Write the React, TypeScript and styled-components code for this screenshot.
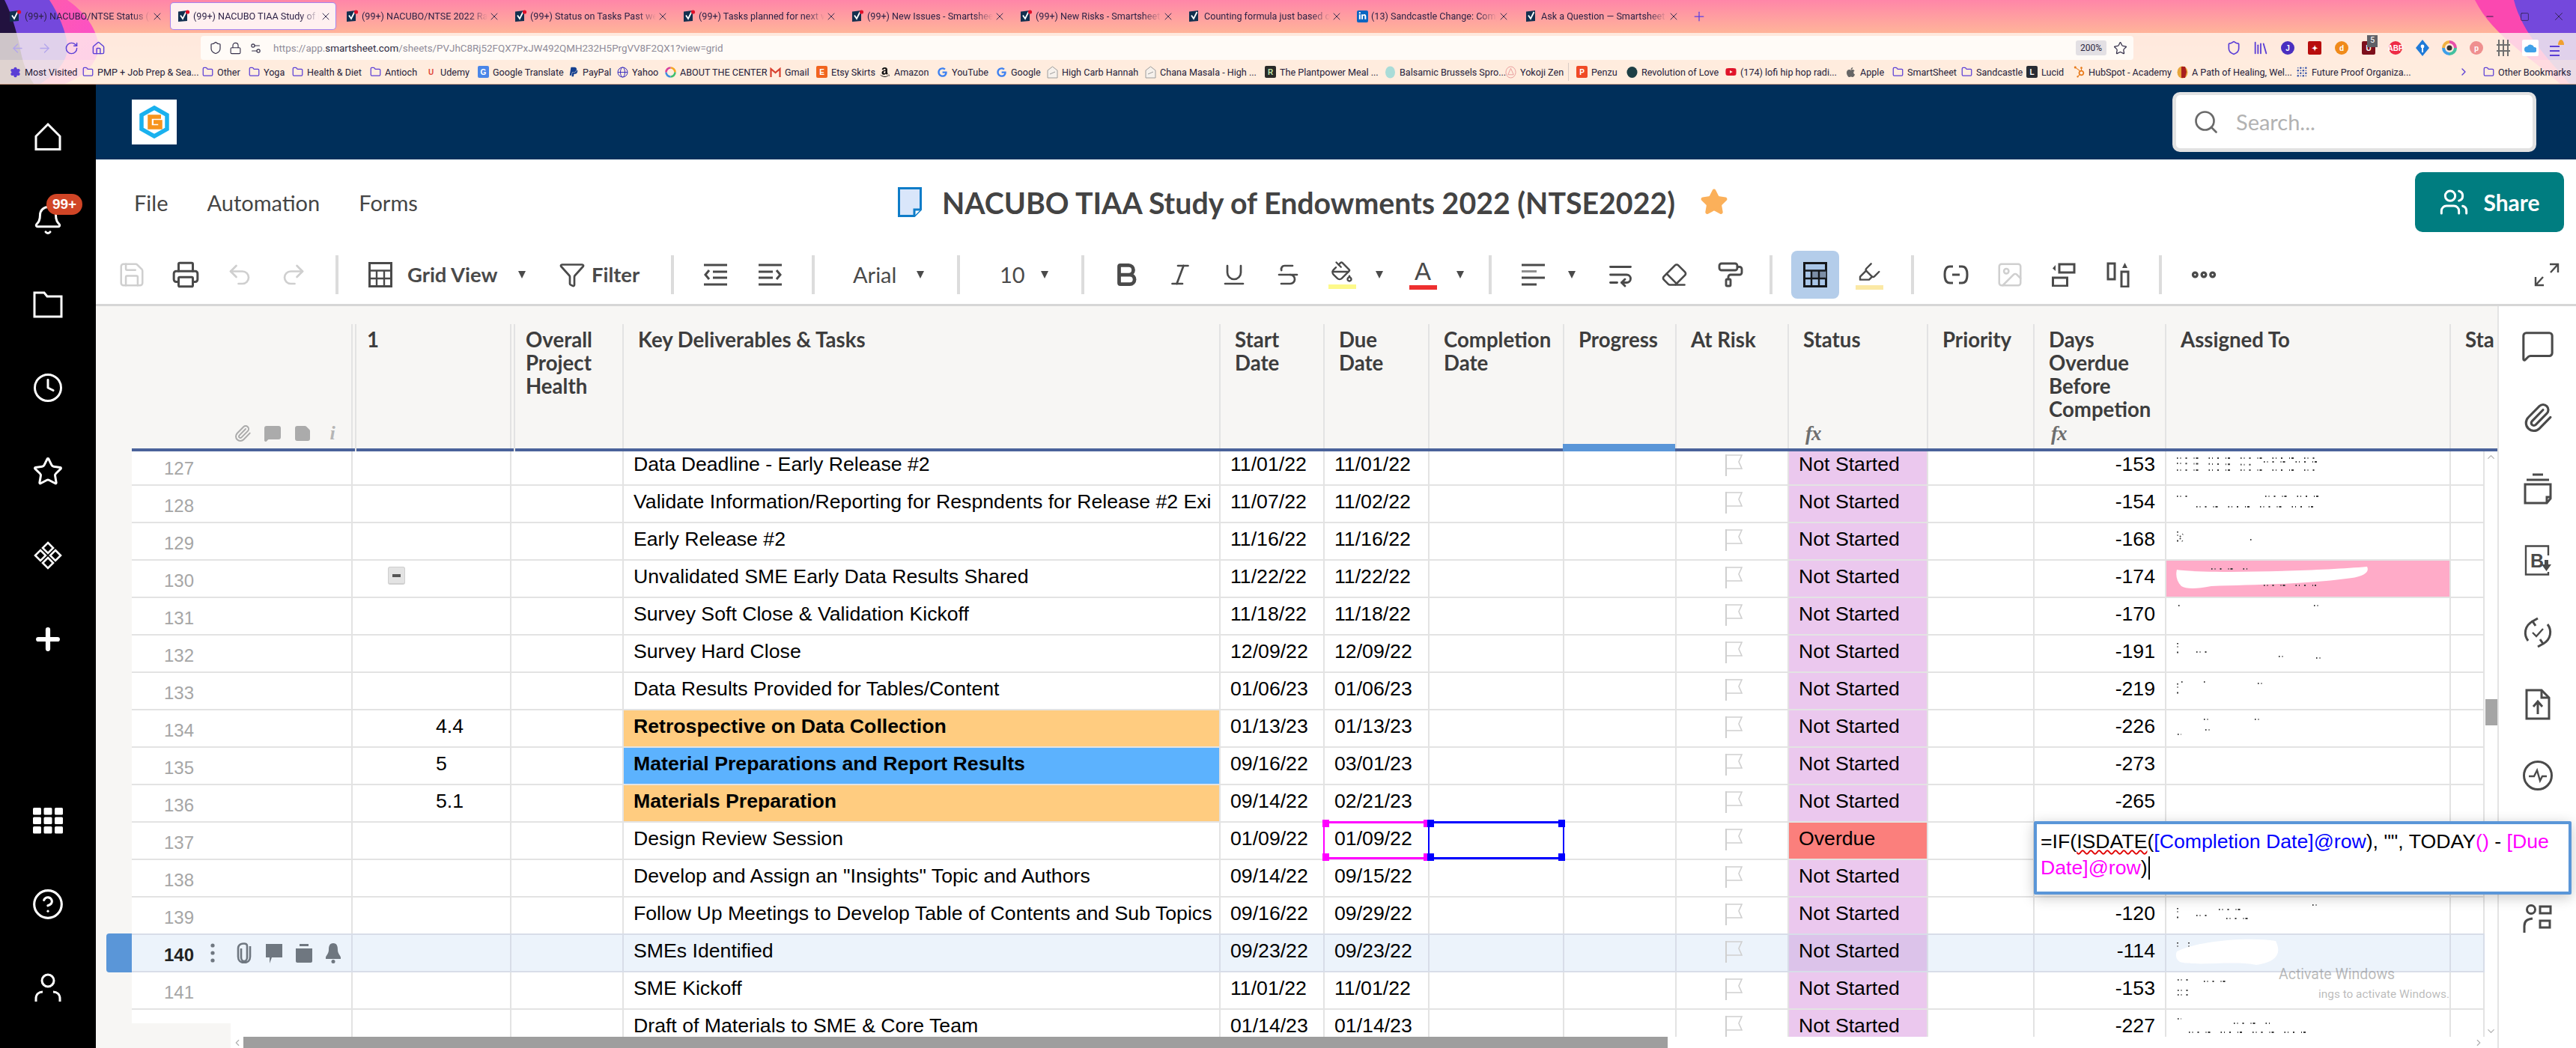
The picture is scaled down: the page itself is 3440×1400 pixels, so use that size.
import React from "react";
import styled, { createGlobalStyle, css } from "styled-components";
import {
  ArrowLeft,
  ArrowRight,
  Bold,
  Bell,
  ChevronLeft,
  ChevronRight,
  ChevronUp,
  ChevronDown,
  CircleHelp,
  Clock,
  Eraser,
  Filter,
  Highlighter,
  Home,
  Image,
  Italic,
  Library,
  Lock,
  Minus,
  MoreHorizontal,
  PaintBucket,
  PaintRoller,
  Paperclip,
  Plus,
  Printer,
  Redo2,
  RotateCw,
  Save,
  Search,
  Settings2,
  Shield,
  Star,
  Strikethrough,
  Underline,
  Undo2,
  Users,
  WrapText,
  X,
  Folder,
  Settings,
  MessageSquare,
  Square,
} from "lucide-react";
import { FaAmazon, FaApple, FaGoogle, FaHubspot, FaPaypal, FaYoutube, FaLinkedinIn } from "react-icons/fa";

const GlobalStyle = createGlobalStyle`
  * {
    box-sizing: border-box;
  }

  html, body {
    margin: 0;
    padding: 0;
    background: #fff;
  }

  body {
    font-family: "Liberation Sans", Arial, sans-serif;
  }
`;

const COLUMN_WIDTHS = "295px 212px 150px 797px 139px 140px 180px 150px 150px 186px 142px 176px 380px";
const COLUMNS = `${COLUMN_WIDTHS} 45px`;
// the header runs on above the vertical scrollbar
const HEADER_COLUMNS = `${COLUMN_WIDTHS} 62px`;

type RowData = {
  n: number;
  one?: string;
  name: string;
  fill?: "orange" | "blue";
  start: string;
  due: string;
  status: string;
  days?: string;
  ink?: string;
  blob?: string;
  toggle?: boolean;
  pink?: boolean;
  current?: boolean;
  selected?: boolean;
};

const ROWS: RowData[] = [
  { n: 127, name: "Data Deadline - Early Release #2", start: "11/01/22", due: "11/01/22", status: "Not Started", days: "-153", ink: "M14 13H206M14 20L120 22M130 18H206M14 29H206" },
  { n: 128, name: "Validate Information/Reporting for Respndents for Release #2 Exi", start: "11/07/22", due: "11/02/22", status: "Not Started", days: "-154", ink: "M14 14H30M132 14H205M40 28H205" },
  { n: 129, name: "Early Release #2", start: "11/16/22", due: "11/16/22", status: "Not Started", days: "-168", ink: "M15 11V28M18 18L25 12M18 20L25 28M112 22H116" },
  { n: 130, name: "Unvalidated SME Early Data Results Shared", start: "11/22/22", due: "11/22/22", status: "Not Started", days: "-174", toggle: true, pink: true, ink: "M60 11H110M130 33H200", blob: "M14 12C50 18 200 14 268 8C272 16 262 22 240 24C180 32 110 32 60 34C40 38 26 38 20 34C14 28 12 20 14 12Z" },
  { n: 131, name: "Survey Soft Close & Validation Kickoff", start: "11/18/22", due: "11/18/22", status: "Not Started", days: "-170", ink: "M16 10H18M197 10H206" },
  { n: 132, name: "Survey Hard Close", start: "12/09/22", due: "12/09/22", status: "Not Started", days: "-191", ink: "M15 10V30M40 22H58M150 28H156M200 30H206" },
  { n: 133, name: "Data Results Provided for Tables/Content", start: "01/06/23", due: "01/06/23", status: "Not Started", days: "-219", ink: "M15 14V32M20 12H22M50 12H54M122 14H130" },
  { n: 134, name: "Retrospective on Data Collection", one: "4.4", fill: "orange", start: "01/13/23", due: "01/13/23", status: "Not Started", days: "-226", ink: "M15 32H20M50 12H60M52 26H58M118 12H128" },
  { n: 135, name: "Material Preparations and Report Results", one: "5", fill: "blue", start: "09/16/22", due: "03/01/23", status: "Not Started", days: "-273" },
  { n: 136, name: "Materials Preparation", one: "5.1", fill: "orange", start: "09/14/22", due: "02/21/23", status: "Not Started", days: "-265" },
  { n: 137, name: "Design Review Session", start: "01/09/22", due: "01/09/22", status: "Overdue", selected: true },
  { n: 138, name: "Develop and Assign an \"Insights\" Topic and Authors", start: "09/14/22", due: "09/15/22", status: "Not Started" },
  { n: 139, name: "Follow Up Meetings to Develop Table of Contents and Sub Topics", start: "09/16/22", due: "09/29/22", status: "Not Started", days: "-120", ink: "M15 14V28M40 24H60M70 16H100M80 28H120M195 10H205" },
  { n: 140, name: "SMEs Identified", start: "09/23/22", due: "09/23/22", status: "Not Started", days: "-114", current: true, ink: "M15 10V16M30 10V16M60 24H90M100 20H120", blob: "M14 22C40 8 110 2 146 8C154 24 148 36 120 40C90 34 40 42 18 36C12 32 12 26 14 22Z" },
  { n: 141, name: "SME Kickoff", start: "11/01/22", due: "11/01/22", status: "Not Started", days: "-153", ink: "M15 10H30M50 12H90M15 24H30M15 30H35" },
  { n: 142, name: "Draft of Materials to SME & Core Team", start: "01/14/23", due: "01/14/23", status: "Not Started", days: "-227", ink: "M15 12H20M90 18H140M30 30H190" },
];

const TABS = [
  "(99+) NACUBO/NTSE Status (2022) Report",
  "(99+) NACUBO TIAA Study of Endowments",
  "(99+) NACUBO/NTSE 2022 Raid Log",
  "(99+) Status on Tasks Past week",
  "(99+) Tasks planned for next week",
  "(99+) New Issues - Smartsheet.com",
  "(99+) New Risks - Smartsheet.com",
  "Counting formula just based on",
  "(13) Sandcastle Change: Company",
  "Ask a Question — Smartsheet Community",
];

const BOOKMARKS: { x: number; kind: string; label?: string }[] = [
  { x: 13, kind: "gear", label: "Most Visited" },
  { x: 110, kind: "folder", label: "PMP + Job Prep & Sea..." },
  { x: 270, kind: "folder", label: "Other" },
  { x: 332, kind: "folder", label: "Yoga" },
  { x: 390, kind: "folder", label: "Health & Diet" },
  { x: 494, kind: "folder", label: "Antioch" },
  { x: 568, kind: "udemy", label: "Udemy" },
  { x: 638, kind: "translate", label: "Google Translate" },
  { x: 758, kind: "paypal", label: "PayPal" },
  { x: 824, kind: "globe", label: "Yahoo" },
  { x: 888, kind: "ring", label: "ABOUT THE CENTER" },
  { x: 1028, kind: "gmail", label: "Gmail" },
  { x: 1090, kind: "etsy", label: "Etsy Skirts" },
  { x: 1174, kind: "amazon", label: "Amazon" },
  { x: 1251, kind: "google", label: "YouTube" },
  { x: 1330, kind: "google", label: "Google" },
  { x: 1398, kind: "page", label: "High Carb Hannah" },
  { x: 1529, kind: "page", label: "Chana Masala - High ..." },
  { x: 1689, kind: "rr", label: "The Plantpower Meal ..." },
  { x: 1849, kind: "sprout", label: "Balsamic Brussels Spro..." },
  { x: 2010, kind: "yokoji", label: "Yokoji Zen" },
  { x: 2094, kind: "sep" },
  { x: 2105, kind: "penzu", label: "Penzu" },
  { x: 2172, kind: "tree", label: "Revolution of Love" },
  { x: 2304, kind: "youtube", label: "(174) lofi hip hop radi..." },
  { x: 2464, kind: "apple", label: "Apple" },
  { x: 2527, kind: "folder", label: "SmartSheet" },
  { x: 2619, kind: "folder", label: "Sandcastle" },
  { x: 2706, kind: "lucid", label: "Lucid" },
  { x: 2769, kind: "hubspot", label: "HubSpot - Academy" },
  { x: 2907, kind: "path", label: "A Path of Healing, Wel..." },
  { x: 3067, kind: "dots", label: "Future Proof Organiza..." },
  { x: 3282, kind: "more" },
  { x: 3316, kind: "folder", label: "Other Bookmarks" },
];

const Page = styled.div`
  width: 3440px;
  height: 1400px;
  overflow: hidden;
  display: flex;
  flex-direction: column;
  background: #fff;
`;

/* browser chrome */
const Chrome = styled.div`
  position: relative;
  height: 113px;
  flex: none;
  border-bottom: 1px solid #c89a84;
  overflow: hidden;
`;
const ChromeArt = styled.svg`
  position: absolute;
  inset: 0;
`;
const TabStrip = styled.div`
  position: relative;
  height: 44px;
  display: flex;
  gap: 5px;
  padding: 4px 0 5px 3px;
`;
const Tab = styled.div<{ $active?: boolean }>`
  width: 220px;
  flex: none;
  display: flex;
  align-items: center;
  padding-left: 9px;
  border-radius: 4px;
  font: 12.6px Roboto, sans-serif;
  color: #2c2146;
  ${(p) =>
    p.$active &&
    css`
      background: #fff0f0;
      box-shadow: 0 0 0 1px #a583f0;
    `}
`;
const TabTitle = styled.span`
  width: 168px;
  margin-left: 4px;
  overflow: hidden;
  white-space: nowrap;
  -webkit-mask-image: linear-gradient(90deg, #000 85%, transparent);
  mask-image: linear-gradient(90deg, #000 85%, transparent);
`;
const TabClose = styled.span`
  display: flex;
  margin-left: 1px;
  color: #3a3052;
`;
const NewTab = styled.div`
  width: 32px;
  display: flex;
  align-items: center;
  justify-content: center;
  color: #5b3fe0;
`;
const WindowButtons = styled.div`
  margin-left: auto;
  margin-top: 2px;
  display: flex;
  align-items: flex-start;
`;
const WindowButton = styled.div`
  width: 46px;
  height: 32px;
  display: flex;
  align-items: center;
  justify-content: center;
  color: #2c2146;
`;
const AddressRow = styled.div`
  position: relative;
  height: 36px;
  display: flex;
  padding-left: 5px;
  background: rgba(255, 247, 240, 0.78);
`;
const NavButton = styled.div<{ $dim?: boolean }>`
  width: 36px;
  height: 36px;
  margin-top: 2px;
  display: flex;
  align-items: center;
  justify-content: center;
  color: ${(p) => (p.$dim ? "#b3a6ec" : "#5b3fd6")};
`;
const UrlBar = styled.div`
  width: 2581px;
  height: 32px;
  margin: 4px 0 0 119px;
  display: flex;
  align-items: center;
  padding-left: 6px;
  background: #fffbf7;
  border-radius: 4px;
  color: #35304a;
`;
const UrlIcon = styled.span`
  width: 27px;
  display: flex;
  justify-content: center;
`;
const UrlText = styled.span`
  margin-left: 10px;
  font: 13.4px Roboto, sans-serif;
  color: #8f8b99;
  white-space: nowrap;
  b {
    font-weight: 400;
    color: #2b2740;
  }
`;
const ZoomPill = styled.span`
  margin-left: auto;
  width: 41px;
  height: 20px;
  display: flex;
  align-items: center;
  justify-content: center;
  background: #e3e0e4;
  border-radius: 3px;
  font: 12px Roboto, sans-serif;
  color: #2b2740;
`;
const BarStar = styled.span`
  width: 36px;
  display: flex;
  justify-content: center;
`;
const Extensions = styled.div`
  display: flex;
  margin-left: 116px;
`;
const Ext = styled.div`
  position: relative;
  width: 36px;
  height: 36px;
  margin-top: 2px;
  display: flex;
  align-items: center;
  justify-content: center;
`;
const ExtChip = styled.span<{ $bg: string; $round?: boolean; $size?: number }>`
  width: ${(p) => p.$size ?? 18}px;
  height: ${(p) => p.$size ?? 18}px;
  display: flex;
  align-items: center;
  justify-content: center;
  background: ${(p) => p.$bg};
  border-radius: ${(p) => (p.$round ? "50%" : "2px")};
  color: #fff;
  font: 700 10px "Liberation Sans", sans-serif;
`;
const ExtBadge = styled.span`
  position: absolute;
  top: 1px;
  right: 6px;
  width: 14px;
  height: 16px;
  background: #5f6066;
  color: #fff;
  font: 11px Roboto, sans-serif;
  text-align: center;
`;
const BookmarkRow = styled.div`
  position: relative;
  height: 32px;
  display: flex;
  align-items: center;
  padding-left: 13px;
  background: rgba(255, 243, 232, 0.86);
  font: 12.6px Roboto, sans-serif;
  color: #25203a;
`;
const Bookmark = styled.div<{ $w: number }>`
  width: ${(p) => p.$w}px;
  flex: none;
  display: flex;
  align-items: center;
  gap: 5px;
  white-space: nowrap;
`;
const BookmarkSep = styled.span`
  width: 1px;
  height: 24px;
  background: #d8ccc4;
`;
const FavBox = styled.span<{ $bg?: string; $color?: string }>`
  width: 15px;
  height: 16px;
  flex: none;
  display: flex;
  align-items: center;
  justify-content: center;
  background: ${(p) => p.$bg ?? "transparent"};
  color: ${(p) => p.$color ?? "#5b3fd6"};
  border-radius: 2px;
  font: 700 10px "Liberation Sans", sans-serif;
`;

/* app frame */
const Body = styled.div`
  flex: 1;
  min-height: 0;
  display: flex;
`;
const SideRail = styled.nav`
  width: 128px;
  flex: none;
  display: flex;
  flex-direction: column;
  padding: 13px 0 24px;
  background: #000;
  color: #fff;
`;
const RailButton = styled.div`
  position: relative;
  height: 112px;
  display: flex;
  align-items: center;
  justify-content: center;
`;
const RailSpacer = styled.div`
  flex: 1;
`;
const RailBadge = styled.span`
  position: absolute;
  left: 62px;
  top: 21px;
  width: 48px;
  height: 28px;
  display: flex;
  align-items: center;
  justify-content: center;
  background: #d04526;
  border-radius: 14px;
  font: 700 19px "Liberation Sans", sans-serif;
`;
const Main = styled.main`
  flex: 1;
  min-width: 0;
  display: flex;
  flex-direction: column;
`;
const TopBar = styled.header`
  height: 100px;
  flex: none;
  display: flex;
  align-items: center;
  justify-content: space-between;
  padding: 0 53px 0 48px;
  background: #002f5a;
`;
const LogoBox = styled.div`
  width: 60px;
  height: 60px;
  display: flex;
  align-items: center;
  justify-content: center;
  background: #fff;
`;
const SearchBox = styled.div`
  width: 486px;
  height: 80px;
  display: flex;
  align-items: center;
  gap: 22px;
  padding-left: 22px;
  background: #fff;
  border: 5px solid #e2e2e2;
  border-top-width: 4px;
  border-radius: 10px;
  font: 29px Lato, sans-serif;
  color: #b2b2b2;
`;
const TitleRow = styled.div`
  height: 114px;
  flex: none;
  display: flex;
  align-items: center;
  padding-right: 16px;
`;
const MenuBar = styled.div`
  width: 1071px;
  flex: none;
  display: flex;
  gap: 52px;
  padding-left: 51px;
  font: 29px Lato, sans-serif;
  color: #454545;
`;
const SheetTitle = styled.h1`
  margin: 0 33px 0 27px;
  font: 700 39.3px Lato, sans-serif;
  color: #434343;
  white-space: nowrap;
`;
const ShareButton = styled.button`
  width: 199px;
  height: 80px;
  margin-left: auto;
  display: flex;
  align-items: center;
  justify-content: center;
  gap: 19px;
  border: 0;
  border-radius: 10px;
  background: #007d80;
  color: #fff;
  font: 700 30px Lato, sans-serif;
`;
const Toolbar = styled.div`
  height: 79px;
  flex: none;
  display: flex;
  align-items: center;
  padding: 0 3px 0 12px;
  border-bottom: 0;
  color: #4a4a4a;
`;
const ToolRule = styled.div`
  height: 3px;
  flex: none;
  background: #d6d6d6;
`;
const Tool = styled.div<{ $w?: number; $ml?: number; $dim?: boolean; $pl?: number; $gap?: number }>`
  width: ${(p) => p.$w ?? 72}px;
  height: 64px;
  flex: none;
  margin-left: ${(p) => p.$ml ?? 0}px;
  padding-left: ${(p) => p.$pl ?? 0}px;
  display: flex;
  align-items: center;
  justify-content: ${(p) => (p.$pl !== undefined ? "flex-start" : "center")};
  gap: ${(p) => p.$gap ?? 0}px;
  color: ${(p) => (p.$dim ? "#cfcfcf" : "#4a4a4a")};
  white-space: nowrap;
`;
const ToolLabel = styled.span<{ $plain?: boolean }>`
  font: ${(p) => (p.$plain ? "400 29px" : "700 27.4px")} Lato, sans-serif;
`;
const ToolSep = styled.div<{ $l?: number; $r?: number }>`
  width: 4px;
  height: 52px;
  flex: none;
  margin: 0 ${(p) => p.$r ?? 20}px 0 ${(p) => p.$l ?? 20}px;
  background: #dcdcdc;
`;
const Caret = styled.span`
  width: 0;
  height: 0;
  border-left: 5.5px solid transparent;
  border-right: 5.5px solid transparent;
  border-top: 10px solid #4a4a4a;
`;
const ActiveTool = styled.div`
  width: 64px;
  height: 64px;
  flex: none;
  display: flex;
  align-items: center;
  justify-content: center;
  background: #b4cdea;
  border-radius: 8px;
`;
const ColorStack = styled.div`
  display: flex;
  flex-direction: column;
  align-items: center;
  gap: 2px;
`;
const Swatch = styled.span<{ $c: string }>`
  width: 37px;
  height: 6px;
  background: ${(p) => p.$c};
`;
const BigA = styled.span`
  font: 400 33px/32px "Liberation Sans", sans-serif;
  color: #4a4a4a;
`;

/* sheet */
const Workspace = styled.div`
  position: relative;
  flex: 1;
  min-height: 0;
  display: flex;
`;
const Sheet = styled.section`
  position: relative;
  width: 3207px;
  flex: none;
  display: flex;
  flex-direction: column;
  background: #f7f6f4;
`;
const HeaderRow = styled.div`
  position: relative;
  z-index: 2;
  height: 194px;
  flex: none;
  margin-left: 48px;
  width: 3159px;
  padding-top: 24px;
  display: grid;
  grid-template-columns: ${HEADER_COLUMNS};
  border-bottom: 4px solid #4a629a;
`;
const HeaderCell = styled.div<{ $lead?: boolean; $active?: boolean; $last?: boolean }>`
  position: relative;
  min-width: 0;
  overflow: ${(p) => (p.$active || p.$lead ? "visible" : "hidden")};
  display: flex;
  flex-direction: column;
  padding: 5px 0 8px 19px;
  border-right: ${(p) => (p.$last ? "0" : "2px solid #e3e3e3")};
  font: 700 27.6px/31px Lato, sans-serif;
  color: #3d3d3d;
  white-space: nowrap;
  ${(p) =>
    p.$lead &&
    css`
      &::before {
        content: "";
        position: absolute;
        left: 3px;
        top: 0;
        bottom: -4px;
        width: 2px;
        background: #e3e3e3;
      }
    `}
  ${(p) =>
    p.$active &&
    css`
      &::after {
        content: "";
        position: absolute;
        left: -2px;
        right: 0;
        bottom: -4px;
        height: 10px;
        background: #5a96d8;
      }
    `}
`;
const HeaderTools = styled.div`
  margin-top: auto;
  display: flex;
  align-items: center;
  justify-content: flex-end;
  gap: 16px;
  padding-right: 13px;
  color: #ababab;
`;
const HeaderInfo = styled.i`
  width: 24px;
  text-align: center;
  font: italic 700 26px/24px "Liberation Serif", serif;
  color: #b5b5b5;
`;
const Fx = styled.i`
  margin-top: auto;
  font: italic 700 27px/24px "Liberation Serif", serif;
  color: #6e6e6e;
  padding-left: 3px;
  letter-spacing: -1px;
`;
const GridBody = styled.div`
  position: relative;
  flex: 1;
  min-height: 0;
  display: flex;
  padding-left: 48px;
  overflow: hidden;
`;
const Rows = styled.div`
  width: 3142px;
  flex: none;
  margin-top: -4px;
  background: #fff;
`;
const Row = styled.div<{ $current?: boolean }>`
  position: relative;
  height: 50px;
  display: grid;
  grid-template-columns: ${COLUMNS};
  background: ${(p) => (p.$current ? "#ecf3fb" : "#fff")};
  border-bottom: 2px solid ${(p) => (p.$current ? "#d8dde8" : "#e3e3e3")};
  ${(p) => p.$current && "box-shadow: 0 -2px 0 #d8dde8;"}
`;
const Handle = styled.span`
  position: absolute;
  left: -34px;
  top: -2px;
  bottom: -2px;
  width: 34px;
  background: #5a96d8;
  border-radius: 4px 0 0 4px;
`;
const Cell = styled.div<{ $bg?: string; $line?: string; $right?: boolean; $bold?: boolean; $visible?: boolean }>`
  position: relative;
  min-width: 0;
  padding: 6px 13px 0 13px;
  overflow: ${(p) => (p.$visible ? "visible" : "hidden")};
  white-space: nowrap;
  font: ${(p) => (p.$bold ? "700" : "400")} 26.67px/30px "Liberation Sans", Arial, sans-serif;
  color: #000;
  text-align: ${(p) => (p.$right ? "right" : "left")};
  border-right: 2px solid ${(p) => p.$line ?? "#e3e3e3"};
  background: ${(p) => p.$bg ?? "transparent"};
`;
const NumberCell = styled.div<{ $line?: string }>`
  display: flex;
  align-items: center;
  height: 48px;
  border-right: 2px solid ${(p) => p.$line ?? "#e3e3e3"};
`;
const RowNumber = styled.span<{ $current?: boolean }>`
  width: 83px;
  flex: none;
  padding-top: 6px;
  text-align: right;
  font: ${(p) => (p.$current ? "700" : "400")} 24px "Liberation Sans", sans-serif;
  color: ${(p) => (p.$current ? "#222" : "#a6a6a6")};
`;
const RowTools = styled.div`
  display: flex;
  align-items: center;
  gap: 16px;
  margin-left: 21px;
  color: #6f7780;
`;
const RowDots = styled.svg`
  margin-right: 10px;
`;
const IndentCell = styled(Cell)`
  padding-left: 111px;
`;
const Toggle = styled.span`
  margin: 2px 0 0 34px;
  width: 23px;
  height: 24px;
  display: flex;
  align-items: center;
  justify-content: center;
  background: #e3e3e3;
  border: 1px solid #cfcfcf;
  border-bottom-width: 2px;
  border-radius: 3px;
  &::after {
    content: "";
    width: 11px;
    height: 4px;
    background: #555;
  }
`;
const FlagCell = styled(Cell)`
  padding: 8px 0 0 65px;
`;
const NameCell = styled(Cell)`
  padding: 0;
`;
const Selection = styled.div<{ $c: string }>`
  position: absolute;
  z-index: 3;
  inset: -2px -2px -1px -2px;
  border: solid ${(p) => p.$c};
  border-width: 3px 2px;
  pointer-events: none;
`;
const Grip = styled.span<{ $c: string; $x: "l" | "r"; $y: "t" | "b" }>`
  position: absolute;
  width: 9px;
  height: 10px;
  background: ${(p) => p.$c};
  ${(p) => (p.$x === "l" ? "left: -3px;" : "right: -3px;")}
  ${(p) => (p.$y === "t" ? "top: -5px;" : "bottom: -5px;")}
`;
const VTrack = styled.div`
  width: 17px;
  flex: none;
  display: flex;
  flex-direction: column;
  align-items: center;
  background: #fff;
  color: #b0b0b0;
`;
const VThumb = styled.div`
  width: 16px;
  height: 35px;
  margin-top: 316px;
  background: #a5a5a5;
`;
const VEnd = styled.div`
  margin-top: auto;
  display: flex;
`;
const HTrack = styled.div`
  height: 15px;
  flex: none;
  display: flex;
  align-items: center;
  background: #fff;
  color: #b0b0b0;
`;
const HPatch = styled.div`
  width: 180px;
  height: 15px;
  background: #f7f6f4;
`;
const HArrow = styled.div`
  width: 17px;
  display: flex;
  justify-content: center;
`;
const HThumb = styled.div`
  width: 1902px;
  height: 15px;
  background: #9e9e9e;
`;
const HEnd = styled.div`
  margin-left: auto;
  margin-right: 18px;
  display: flex;
`;
const CornerPatch = styled.div`
  position: absolute;
  left: 48px;
  bottom: 0;
  width: 132px;
  height: 18px;
  z-index: 2;
  background: #f7f6f4;
`;
const Watermark = styled.div`
  position: absolute;
  z-index: 2;
  left: 2915px;
  top: 879px;
  pointer-events: none;
  font-family: Roboto, sans-serif;
  color: rgba(120, 120, 120, 0.5);
`;
const WatermarkTop = styled.div`
  font-size: 19.5px;
  line-height: 28px;
`;
const WatermarkSub = styled.div`
  margin: 3px 0 0 53px;
  font-size: 15.4px;
  white-space: nowrap;
`;
const FormulaBox = styled.div`
  position: absolute;
  z-index: 5;
  left: 2588px;
  top: 688px;
  width: 718px;
  height: 98px;
  padding: 6px 4px 0 5px;
  background: #fff;
  border: 4px solid #5a96d8;
  border-radius: 2px;
  box-shadow: 0 4px 18px rgba(0, 0, 0, 0.22);
  font: 26.67px/35px "Liberation Sans", Arial, sans-serif;
  color: #000;
`;
const Err = styled.span`
  text-decoration: underline wavy #e00000 1.5px;
  text-underline-offset: 2px;
`;
const Ref = styled.span<{ $c: string }>`
  color: ${(p) => p.$c};
`;
const TextCaret = styled.span`
  display: inline-block;
  width: 2px;
  height: 31px;
  margin-left: 1px;
  vertical-align: -7px;
  background: #000;
`;
const RightPanel = styled.aside`
  flex: 1;
  display: flex;
  flex-direction: column;
  padding-top: 5px;
  border-left: 2px solid #e4e4e4;
  background: #fff;
  color: #4a4a4a;
`;
const PanelButton = styled.div`
  height: 95.75px;
  flex: none;
  display: flex;
  align-items: center;
  justify-content: center;
`;

const SheetFavicon = ({ dot = true }: { dot?: boolean }) => (
  <svg width="17" height="17" viewBox="0 0 17 17">
    <path d="M1 2.5L13 1V15L1 16Z" fill="#12304f" />
    <path d="M4 7.5L7 12L11.5 3" fill="none" stroke="#fff" strokeWidth="1.8" />
    {dot && <circle cx="13.5" cy="3" r="2.6" fill="#e0102a" />}
  </svg>
);

const HomeIcon = () => (
  <svg width="40" height="40" viewBox="0 0 40 40" fill="none" stroke="#fff" strokeWidth="3">
    <path d="M20 4L36 20V37.5H4V20Z" />
  </svg>
);
const FolderIcon = () => (
  <svg width="40" height="40" viewBox="0 0 40 40" fill="none" stroke="#fff" strokeWidth="3">
    <path d="M2 5H15L19 10H38V37H2Z" />
  </svg>
);
const DiamondsIcon = () => (
  <svg width="40" height="40" viewBox="0 0 40 40" fill="none" stroke="#fff" strokeWidth="2.6">
    <path d="M20 3L27 10L20 17L13 10Z" />
    <path d="M10 13L17 20L10 27L3 20Z" />
    <path d="M30 13L37 20L30 27L23 20Z" />
    <path d="M20 23L27 30L20 37L13 30Z" />
  </svg>
);
const AppsIcon = () => (
  <svg width="40" height="40" viewBox="0 0 40 40" fill="#fff">
    {[0, 1, 2].map((r) =>
      [0, 1, 2].map((c) => <rect key={`${r}${c}`} x={0 + c * 14.5} y={3 + r * 12.5} width="11" height="9.5" rx="1.5" />)
    )}
  </svg>
);
const PersonIcon = ({ size = 40, color = "#fff" }: { size?: number; color?: string }) => (
  <svg width={size} height={size} viewBox="0 0 40 40" fill="none" stroke={color} strokeWidth="3">
    <circle cx="20" cy="10" r="8" />
    <path d="M4 38V34C4 28 8 25 13 25M36 38V34C36 28 32 25 27 25" />
  </svg>
);
const LogoMark = () => (
  <svg width="44" height="44" viewBox="0 0 44 44" fill="none">
    <path d="M22 3L39 12.5V31.5L22 41L5 31.5V12.5Z" stroke="#1ab1ee" strokeWidth="5.5" />
    <path d="M31 15H16V29H30V22H21" stroke="#f7941d" strokeWidth="5.5" />
  </svg>
);
const DocIcon = () => (
  <svg width="32" height="40" viewBox="0 0 32 40">
    <path d="M1.5 1.5H30.5V30L22 38.5H1.5Z" fill="#d9e6fa" stroke="#0e7cc8" strokeWidth="3" />
    <path d="M22 38.5V30H30.5" fill="#fff" stroke="#0e7cc8" strokeWidth="3" />
  </svg>
);
const GridToolIcon = ({ selected }: { selected?: boolean }) => (
  <svg width="32" height="34" viewBox="0 0 32 34" fill="none" stroke={selected ? "#15181c" : "#4a4a4a"} strokeWidth="3">
    <rect x="1.5" y="1.5" width="29" height="31" fill={selected ? "#a9c6e8" : "none"} />
    {selected && <rect x="11" y="11.5" width="19.5" height="10.5" fill="#7c8ea6" stroke="none" />}
    <path d="M1.5 11.5H30.5M1.5 22H30.5M11 11.5V32.5M21 11.5V32.5" strokeWidth="2.4" />
  </svg>
);
const IndentIcon = ({ flip }: { flip?: boolean }) => (
  <svg width="32" height="30" viewBox="0 0 32 30" fill="none" stroke="#4a4a4a" strokeWidth="3">
    {flip ? (
      <path d="M1 2H32M1 28H32M1 11H20M1 19H20M25 9L30 15L25 21" />
    ) : (
      <path d="M0 2H31M0 28H31M12 11H31M12 19H31M7 9L2 15L7 21" />
    )}
  </svg>
);
const AlignIcon = () => (
  <svg width="32" height="30" viewBox="0 0 32 30" fill="none" stroke="#4a4a4a" strokeWidth="3">
    <path d="M0 2H31M0 19H31M0 28H20" />
    <path d="M0 10.5H20" stroke="#8f8f8f" />
  </svg>
);
const LinkToolIcon = () => (
  <svg width="34" height="28" viewBox="0 0 34 28" fill="none" stroke="#4a4a4a" strokeWidth="3">
    <path d="M13 3H9C4 3 2 8 2 14S4 25 9 25H13M21 3H25C30 3 32 8 32 14S30 25 25 25H21M12 14H22" />
  </svg>
);
const MoveRowIcon = () => (
  <svg width="32" height="32" viewBox="0 0 32 32" fill="none" stroke="#4a4a4a" strokeWidth="3">
    <rect x="10" y="2" width="20" height="11" />
    <rect x="1.5" y="20" width="19" height="11" />
    <path d="M5 3L1 7.5L5 11Z" fill="#4a4a4a" stroke="none" />
  </svg>
);
const MoveColIcon = () => (
  <svg width="32" height="34" viewBox="0 0 32 34" fill="none" stroke="#4a4a4a" strokeWidth="3">
    <rect x="3" y="2" width="9" height="21" />
    <rect x="21" y="13" width="9" height="20" />
    <path d="M25.5 1L22 8H29Z" fill="#4a4a4a" stroke="none" />
  </svg>
);
const ExpandIcon = () => (
  <svg width="34" height="32" viewBox="0 0 34 32" fill="none" stroke="#4a4a4a" strokeWidth="2.4">
    <path d="M21 2H32V13M32 2L22 13M2 19V30H13M2 30L12 19" />
  </svg>
);
const FlagIcon = () => (
  <svg width="23" height="29" viewBox="0 0 23 29" fill="none" stroke="#cfcfcf" strokeWidth="1.6">
    <path d="M1 0V29" strokeWidth="2" />
    <path d="M1 1H22L18 10L22 19H1" />
  </svg>
);
const CardsIcon = () => (
  <svg width="42" height="42" viewBox="0 0 42 42" fill="none" stroke="#4a4a4a" strokeWidth="3">
    <path d="M14 2H28M6 9H36" />
    <path d="M4 15H38V34L33 40H4Z" />
    <path d="M38 32H33V40" />
  </svg>
);
const BoxBIcon = () => (
  <svg width="42" height="42" viewBox="0 0 42 42" fill="none" stroke="#4a4a4a" strokeWidth="2.4">
    <path d="M35 14V1.5H5V39.5H35V36" />
    <text x="11" y="30" fontFamily="Liberation Sans" fontWeight="700" fontSize="25" fill="#4a4a4a" stroke="none">B</text>
    <path d="M30 20H35V26H39L32.5 35L26 26H30Z" fill="#4a4a4a" stroke="none" />
  </svg>
);
const SyncIcon = () => (
  <svg width="42" height="42" viewBox="0 0 42 42" fill="none" stroke="#4a4a4a" strokeWidth="3">
    <path d="M8 32C2 24 3 12 14 6M34 10C40 18 39 30 28 36" />
    <path d="M21 2L14 6L18 12M21 40L28 36L24 30" />
    <path d="M14 21L19 26L28 16" strokeWidth="2.4" />
  </svg>
);
const UploadDocIcon = () => (
  <svg width="36" height="42" viewBox="0 0 36 42" fill="none" stroke="#4a4a4a" strokeWidth="3">
    <path d="M3 2H23L33 12V40H3Z" />
    <path d="M23 2V12H33M18 34V18M12 24L18 17L24 24" />
  </svg>
);
const PulseIcon = () => (
  <svg width="42" height="42" viewBox="0 0 42 42" fill="none" stroke="#4a4a4a" strokeWidth="3">
    <circle cx="21" cy="21" r="18.5" />
    <path d="M9 22H16L20 14L24 28L27 22H33" strokeWidth="2.4" />
  </svg>
);
const PeopleIcon = () => (
  <svg width="42" height="42" viewBox="0 0 42 42" fill="none" stroke="#4a4a4a" strokeWidth="3">
    <circle cx="12" cy="8" r="5.5" />
    <path d="M3 39V30C3 23 7 21 14 20" />
    <rect x="24" y="4" width="14" height="9" />
    <rect x="24" y="23" width="13" height="9" />
  </svg>
);

const Redaction = ({ ink, blob }: { ink?: string; blob?: string }) => (
  <svg width="378" height="48" viewBox="0 0 378 48" fill="none">
    {ink && <path d={ink} stroke="#3a3a3a" strokeWidth="2" strokeDasharray="1.5 3 1 6 2 9 1 2 3 14" />}
    {blob && <path d={blob} fill="#fff" />}
  </svg>
);

const RowTipIcons = () => (
  <RowTools>
    <RowDots width="8" height="28" viewBox="0 0 8 28" fill="currentColor">
      <circle cx="4" cy="4" r="2.6" />
      <circle cx="4" cy="14" r="2.6" />
      <circle cx="4" cy="24" r="2.6" />
    </RowDots>
    <svg width="24" height="28" viewBox="0 0 24 28" fill="none" stroke="currentColor" strokeWidth="2.6">
      <path d="M8 8V20C8 23 10 25 12 25S16 23 16 20V5C16 2 14 1.5 12 1.5S4 2 4 8V19C4 24 7 27 12 27S20 24 20 19V5" />
    </svg>
    <svg width="24" height="28" viewBox="0 0 24 28" fill="currentColor">
      <path d="M1 2H23V20H9L6 28V20H1Z" />
    </svg>
    <svg width="24" height="28" viewBox="0 0 24 28" fill="currentColor">
      <rect x="6" y="2" width="12" height="3" />
      <path d="M1 8H23V25C23 26 22 27 21 27H3C2 27 1 26 1 25Z" />
    </svg>
    <svg width="22" height="28" viewBox="0 0 22 28" fill="currentColor">
      <path d="M11 1C16 1 17 5 17 10C17 15 21 18 21 20V22H1V20C1 18 5 15 5 10C5 5 6 1 11 1Z" />
      <circle cx="11" cy="25.5" r="2.5" />
    </svg>
  </RowTools>
);

const BookmarkIcon = ({ kind }: { kind: string }) => {
  switch (kind) {
    case "gear":
      return <FavBox><Settings size={15} fill="#5b3fd6" color="#5b3fd6" /></FavBox>;
    case "folder":
      return <FavBox><Folder size={16} /></FavBox>;
    case "udemy":
      return <FavBox $color="#e0483a">U</FavBox>;
    case "translate":
      return <FavBox $bg="#4a86e8" $color="#fff">G</FavBox>;
    case "paypal":
      return <FavBox $color="#15408f"><FaPaypal size={14} /></FavBox>;
    case "globe":
      return <FavBox $color="#3a2fc0"><svg width="15" height="15" viewBox="0 0 15 15" fill="none" stroke="currentColor"><circle cx="7.5" cy="7.5" r="6.5" /><ellipse cx="7.5" cy="7.5" rx="3" ry="6.5" /><path d="M1 7.5H14" /></svg></FavBox>;
    case "ring":
      return <FavBox><svg width="15" height="15" viewBox="0 0 15 15" fill="none" strokeWidth="2.6"><path d="M7.5 1.5A6 6 0 0 1 13.5 7.5" stroke="#f5a623" /><path d="M13.5 7.5A6 6 0 0 1 7.5 13.5" stroke="#3fbf6f" /><path d="M7.5 13.5A6 6 0 0 1 1.5 7.5" stroke="#3f8fe0" /><path d="M1.5 7.5A6 6 0 0 1 7.5 1.5" stroke="#d83f9a" /></svg></FavBox>;
    case "gmail":
      return <FavBox><svg width="15" height="13" viewBox="0 0 15 13" fill="none" stroke="#d8412f" strokeWidth="2.2"><path d="M1.5 13V2L7.5 7L13.5 2V13" /></svg></FavBox>;
    case "etsy":
      return <FavBox $bg="#f1641e" $color="#fff">E</FavBox>;
    case "amazon":
      return <FavBox $color="#111"><FaAmazon size={15} /></FavBox>;
    case "google":
      return <FavBox $color="#3e82f1"><FaGoogle size={13} /></FavBox>;
    case "page":
      return <FavBox><svg width="15" height="17" viewBox="0 0 15 17" fill="#f6f1ec" stroke="#9c9c9c"><path d="M1 6L7.5 1L14 6V16H1Z" /><path d="M4 11L11 8" /></svg></FavBox>;
    case "rr":
      return <FavBox $bg="#2a2a28" $color="#bfe3a8">R</FavBox>;
    case "sprout":
      return <FavBox><svg width="15" height="17" viewBox="0 0 15 17" fill="#a9dcd8"><ellipse cx="7.5" cy="8.5" rx="6.5" ry="8" /></svg></FavBox>;
    case "yokoji":
      return <FavBox><svg width="16" height="17" viewBox="0 0 16 17" fill="none" stroke="#e79a9a"><ellipse cx="8" cy="8.5" rx="7" ry="8" /><path d="M8 3L12 12H4Z" /></svg></FavBox>;
    case "penzu":
      return <FavBox $bg="#f04a25" $color="#fff">P</FavBox>;
    case "tree":
      return <FavBox><svg width="16" height="17" viewBox="0 0 16 17" fill="#1d3f45"><ellipse cx="8" cy="8.5" rx="7.5" ry="8" /></svg></FavBox>;
    case "youtube":
      return <FavBox $color="#e0142a"><FaYoutube size={16} /></FavBox>;
    case "apple":
      return <FavBox $color="#666"><FaApple size={15} /></FavBox>;
    case "lucid":
      return <FavBox $bg="#282c33" $color="#fff">L</FavBox>;
    case "hubspot":
      return <FavBox $color="#e87a1a"><FaHubspot size={16} /></FavBox>;
    case "path":
      return <FavBox><svg width="15" height="17" viewBox="0 0 15 17"><ellipse cx="7.5" cy="8.5" rx="7" ry="8" fill="#e7a63a" /><path d="M6 1H11L13 8L11 16H6Z" fill="#a81f1f" /></svg></FavBox>;
    case "dots":
      return <FavBox><svg width="17" height="17" viewBox="0 0 17 17" fill="#2f4fa8">{[2, 6, 10, 14].map((y) => [2, 6, 10, 14].map((x) => <circle key={`${x}${y}`} cx={x} cy={y} r={(x + y) % 8 === 0 ? 1.4 : 0.9} />))}</svg></FavBox>;
    default:
      return null;
  }
};

const ExtensionIcons = () => (
  <Extensions>
    <Ext><Shield size={20} color="#5b3fd6" /></Ext>
    <Ext><Library size={22} color="#5b3fd6" /></Ext>
    <Ext><ExtChip $bg="#4a2fc0" $round>J</ExtChip></Ext>
    <Ext><ExtChip $bg="#b80d0d">✦</ExtChip></Ext>
    <Ext><ExtChip $bg="#f08a1a" $round>d</ExtChip></Ext>
    <Ext>
      <ExtChip $bg="#7d0f1c">U</ExtChip>
      <ExtBadge>5</ExtBadge>
    </Ext>
    <Ext><ExtChip $bg="#ee2a45" $round>ABP</ExtChip></Ext>
    <Ext><svg width="18" height="22" viewBox="0 0 18 22"><path d="M9 0L18 11L9 22L0 11Z" fill="#1f7ad8" /><circle cx="9" cy="9" r="2.4" fill="#fff" /><path d="M9 11V17" stroke="#fff" strokeWidth="2" /></svg></Ext>
    <Ext><svg width="20" height="20" viewBox="0 0 20 20" fill="none" strokeWidth="4"><path d="M10 2A8 8 0 0 1 18 10" stroke="#e84fa8" /><path d="M18 10A8 8 0 0 1 10 18" stroke="#44c0a0" /><path d="M10 18A8 8 0 0 1 2 10" stroke="#3f9fe8" /><path d="M2 10A8 8 0 0 1 10 2" stroke="#f0b040" /><circle cx="10" cy="10" r="3.5" fill="#333" stroke="none" /></svg></Ext>
    <Ext><ExtChip $bg="#ef8f8f" $round>p</ExtChip></Ext>
    <Ext><svg width="18" height="22" viewBox="0 0 18 22" stroke="#6f6f6f" strokeWidth="2"><path d="M3 0V22M9 0V22M15 0V22M0 7H18M0 15H18" /></svg></Ext>
    <Ext><ExtChip $bg="#fff" $size={22}><svg width="16" height="12" viewBox="0 0 16 12" fill="#3fa0e8"><path d="M4 12A4 4 0 0 1 4 4A5 5 0 0 1 13 5A3.5 3.5 0 0 1 13 12Z" /></svg></ExtChip></Ext>
    <Ext><svg width="20" height="24" viewBox="0 0 20 24"><path d="M0 10H13M0 16H13M0 22H13" stroke="#5b3fd6" strokeWidth="2" /><path d="M11 8C11 4 13 1 15 1S19 4 19 8Z" fill="#f0a030" /></svg></Ext>
  </Extensions>
);

export default function App() {
  return (
    <>
      <GlobalStyle />
      <Page>
        <Chrome>
          <ChromeArt width="3440" height="113" viewBox="0 0 3440 113">
            <defs>
              <linearGradient id="sky" x1="0" y1="0" x2="0" y2="1">
                <stop offset="0" stopColor="#ff86a8" />
                <stop offset="0.38" stopColor="#ffb39a" />
                <stop offset="1" stopColor="#ffc7a8" />
              </linearGradient>
              <linearGradient id="magenta" x1="0" y1="0" x2="1" y2="1">
                <stop offset="0" stopColor="#ff5ea8" />
                <stop offset="1" stopColor="#fa4ad4" />
              </linearGradient>
            </defs>
            <rect width="3440" height="113" fill="url(#sky)" />
            <path d="M60 0H90C110 14 128 34 132 62C130 88 108 104 84 113H40Z" fill="url(#magenta)" />
            <path d="M0 0H66C78 18 88 42 90 60C92 84 70 102 52 113H0Z" fill="#7448dc" />
            <path d="M0 0H6C16 20 22 42 26 60C30 84 36 100 46 113H0Z" fill="#22123f" />
            <path d="M3305 0H3440V113H3420C3385 80 3330 50 3305 0Z" fill="#fb48b0" />
            <path d="M3357 0H3440V113H3432C3405 80 3368 45 3357 0Z" fill="#7448dc" />
          </ChromeArt>
          <TabStrip>
            {TABS.map((title, i) => (
              <Tab key={title} $active={i === 1}>
                {i === 8 ? (
                  <FavBox $bg="#0a66c2" $color="#fff"><FaLinkedinIn size={11} /></FavBox>
                ) : (
                  <SheetFavicon dot={i < 7} />
                )}
                <TabTitle>{title}</TabTitle>
                <TabClose><X size={16} strokeWidth={1.5} /></TabClose>
              </Tab>
            ))}
            <NewTab><Plus size={20} strokeWidth={1.5} /></NewTab>
            <WindowButtons>
              <WindowButton><Minus size={14} /></WindowButton>
              <WindowButton><Square size={13} strokeWidth={1.4} /></WindowButton>
              <WindowButton><X size={18} strokeWidth={1.2} /></WindowButton>
            </WindowButtons>
          </TabStrip>
          <AddressRow>
            <NavButton $dim><ArrowLeft size={19} strokeWidth={1.6} /></NavButton>
            <NavButton $dim><ArrowRight size={19} strokeWidth={1.6} /></NavButton>
            <NavButton><RotateCw size={19} strokeWidth={1.8} /></NavButton>
            <NavButton><Home size={19} strokeWidth={1.8} /></NavButton>
            <UrlBar>
              <UrlIcon><Shield size={18} strokeWidth={1.6} /></UrlIcon>
              <UrlIcon><Lock size={17} strokeWidth={1.6} /></UrlIcon>
              <UrlIcon><Settings2 size={17} strokeWidth={1.6} /></UrlIcon>
              <UrlText>
                https://app.<b>smartsheet.com</b>/sheets/PVJhC8Rj52FQX7PxJW492QMH232H5PrgVV8F2QX1?view=grid
              </UrlText>
              <ZoomPill>200%</ZoomPill>
              <BarStar><Star size={19} strokeWidth={1.6} /></BarStar>
            </UrlBar>
            <ExtensionIcons />
          </AddressRow>
          <BookmarkRow>
            {BOOKMARKS.map((b, i) => {
              const next = BOOKMARKS[i + 1];
              const w = next ? next.x - b.x : 110;
              if (b.kind === "sep") return <Bookmark key={b.x} $w={w}><BookmarkSep /></Bookmark>;
              if (b.kind === "more") return <Bookmark key={b.x} $w={w}><ChevronRight size={16} color="#5b3fd6" /></Bookmark>;
              return (
                <Bookmark key={b.x} $w={w}>
                  <BookmarkIcon kind={b.kind} />
                  {b.label}
                </Bookmark>
              );
            })}
          </BookmarkRow>
        </Chrome>

        <Body>
          <SideRail>
            <RailButton><HomeIcon /></RailButton>
            <RailButton>
              <Bell size={42} strokeWidth={1.7} />
              <RailBadge>99+</RailBadge>
            </RailButton>
            <RailButton><FolderIcon /></RailButton>
            <RailButton><Clock size={42} strokeWidth={1.7} /></RailButton>
            <RailButton><Star size={42} strokeWidth={1.7} /></RailButton>
            <RailButton><DiamondsIcon /></RailButton>
            <RailButton><Plus size={44} strokeWidth={3.4} /></RailButton>
            <RailSpacer />
            <RailButton><AppsIcon /></RailButton>
            <RailButton><CircleHelp size={44} strokeWidth={1.7} /></RailButton>
            <RailButton><PersonIcon /></RailButton>
          </SideRail>

          <Main>
            <TopBar>
              <LogoBox><LogoMark /></LogoBox>
              <SearchBox>
                <Search size={36} color="#6a6a6a" strokeWidth={1.8} />
                Search...
              </SearchBox>
            </TopBar>

            <TitleRow>
              <MenuBar>
                <span>File</span>
                <span>Automation</span>
                <span>Forms</span>
              </MenuBar>
              <DocIcon />
              <SheetTitle>NACUBO TIAA Study of Endowments 2022 (NTSE2022)</SheetTitle>
              <Star size={38} fill="#fbb05a" color="#fbb05a" />
              <ShareButton>
                <Users size={40} strokeWidth={1.8} />
                Share
              </ShareButton>
            </TitleRow>

            <Toolbar>
              <Tool $dim><Save size={38} strokeWidth={1.6} /></Tool>
              <Tool><Printer size={38} strokeWidth={1.9} /></Tool>
              <Tool $dim><Undo2 size={36} strokeWidth={1.8} /></Tool>
              <Tool $dim><Redo2 size={36} strokeWidth={1.8} /></Tool>
              <ToolSep />
              <Tool><GridToolIcon /></Tool>
              <Tool $w={140} $pl={0}><ToolLabel>Grid View</ToolLabel></Tool>
              <Tool $w={26}><Caret /></Tool>
              <Tool $w={166} $pl={36} $gap={8}><Filter size={36} strokeWidth={1.8} /><ToolLabel>Filter</ToolLabel></Tool>
              <ToolSep />
              <Tool><IndentIcon /></Tool>
              <Tool><IndentIcon flip /></Tool>
              <ToolSep />
              <Tool $w={108} $pl={31}><ToolLabel $plain>Arial</ToolLabel></Tool>
              <Tool $w={26}><Caret /></Tool>
              <ToolSep $l={36} />
              <Tool $w={80} $pl={33}><ToolLabel $plain>10</ToolLabel></Tool>
              <Tool $w={26}><Caret /></Tool>
              <ToolSep $l={36} />
              <Tool><Bold size={38} strokeWidth={3} /></Tool>
              <Tool><Italic size={36} strokeWidth={1.8} /></Tool>
              <Tool><Underline size={36} strokeWidth={1.8} /></Tool>
              <Tool><Strikethrough size={36} strokeWidth={1.8} /></Tool>
              <Tool>
                <ColorStack>
                  <PaintBucket size={30} strokeWidth={1.9} />
                  <Swatch $c="#fdf98a" />
                </ColorStack>
              </Tool>
              <Tool $w={28}><Caret /></Tool>
              <Tool $w={88}>
                <ColorStack>
                  <BigA>A</BigA>
                  <Swatch $c="#ee3030" />
                </ColorStack>
              </Tool>
              <Tool $w={12}><Caret /></Tool>
              <ToolSep $l={32} />
              <Tool><AlignIcon /></Tool>
              <Tool $w={30}><Caret /></Tool>
              <Tool $ml={14}><WrapText size={36} strokeWidth={1.9} /></Tool>
              <Tool><Eraser size={36} strokeWidth={1.8} /></Tool>
              <Tool $ml={3}><PaintRoller size={36} strokeWidth={1.9} /></Tool>
              <ToolSep $l={16} $r={25} />
              <ActiveTool><GridToolIcon selected /></ActiveTool>
              <Tool $w={80}>
                <ColorStack>
                  <Highlighter size={32} strokeWidth={1.8} />
                  <Swatch $c="#fbe9a5" />
                </ColorStack>
              </Tool>
              <ToolSep $l={16} />
              <Tool><LinkToolIcon /></Tool>
              <Tool $dim><Image size={38} strokeWidth={1.6} /></Tool>
              <Tool><MoveRowIcon /></Tool>
              <Tool><MoveColIcon /></Tool>
              <ToolSep $l={19} />
              <Tool><MoreHorizontal size={40} strokeWidth={3.4} /></Tool>
              <Tool $ml={386}><ExpandIcon /></Tool>
            </Toolbar>
            <ToolRule />

            <Workspace>
              <Sheet>
                <HeaderRow>
                  <HeaderCell>
                    <HeaderTools>
                      <Paperclip size={24} />
                      <MessageSquare size={24} fill="#ababab" />
                      <Save size={24} fill="#ababab" />
                      <HeaderInfo>i</HeaderInfo>
                    </HeaderTools>
                  </HeaderCell>
                  <HeaderCell $lead>1</HeaderCell>
                  <HeaderCell $lead>
                    <span>Overall</span>
                    <span>Project</span>
                    <span>Health</span>
                  </HeaderCell>
                  <HeaderCell>Key Deliverables &amp; Tasks</HeaderCell>
                  <HeaderCell><span>Start</span><span>Date</span></HeaderCell>
                  <HeaderCell><span>Due</span><span>Date</span></HeaderCell>
                  <HeaderCell><span>Completion</span><span>Date</span></HeaderCell>
                  <HeaderCell $active>Progress</HeaderCell>
                  <HeaderCell>At Risk</HeaderCell>
                  <HeaderCell>
                    Status
                    <Fx>fx</Fx>
                  </HeaderCell>
                  <HeaderCell>Priority</HeaderCell>
                  <HeaderCell>
                    <span>Days</span>
                    <span>Overdue</span>
                    <span>Before</span>
                    <span>Competion</span>
                    <Fx>fx</Fx>
                  </HeaderCell>
                  <HeaderCell>Assigned To</HeaderCell>
                  <HeaderCell $last>Sta</HeaderCell>
                </HeaderRow>

                <GridBody>
                  <Rows>
                    {ROWS.map((r) => {
                      const line = r.current ? "#d8dde8" : undefined;
                      const statusBg =
                        r.status === "Overdue" ? "#fb7f7c" : r.current ? "#dcc3ea" : "#ebc8ee";
                      const nameBg = r.fill === "orange" ? "#ffcc80" : r.fill === "blue" ? "#5cb2fe" : undefined;
                      return (
                        <Row key={r.n} $current={r.current}>
                          {r.current && <Handle />}
                          <NumberCell $line={line}>
                            <RowNumber $current={r.current}>{r.n}</RowNumber>
                            {r.current && <RowTipIcons />}
                          </NumberCell>
                          {r.toggle ? (
                            <Cell $line={line}><Toggle /></Cell>
                          ) : (
                            <IndentCell $line={line}>{r.one}</IndentCell>
                          )}
                          <Cell $line={line} />
                          <Cell $line={line} $bg={nameBg} $bold={!!r.fill}>{r.name}</Cell>
                          <Cell $line={line}>{r.start}</Cell>
                          <Cell $line={line} $visible={r.selected}>
                            {r.due}
                            {r.selected && (
                              <Selection $c="#ff00ff">
                                <Grip $c="#ff00ff" $x="l" $y="t" />
                                <Grip $c="#ff00ff" $x="r" $y="t" />
                                <Grip $c="#ff00ff" $x="l" $y="b" />
                                <Grip $c="#ff00ff" $x="r" $y="b" />
                              </Selection>
                            )}
                          </Cell>
                          <Cell $line={line} $visible={r.selected}>
                            {r.selected && (
                              <Selection $c="#0000ff">
                                <Grip $c="#0000ff" $x="l" $y="t" />
                                <Grip $c="#0000ff" $x="r" $y="t" />
                                <Grip $c="#0000ff" $x="l" $y="b" />
                                <Grip $c="#0000ff" $x="r" $y="b" />
                              </Selection>
                            )}
                          </Cell>
                          <Cell $line={line} />
                          <FlagCell $line={line}><FlagIcon /></FlagCell>
                          <Cell $line={line} $bg={statusBg}>{r.status}</Cell>
                          <Cell $line={line} />
                          <Cell $line={line} $right>{r.days}</Cell>
                          <NameCell $line={line} $bg={r.pink ? "#ffabc8" : undefined}>
                            <Redaction ink={r.ink} blob={r.blob} />
                          </NameCell>
                          <Cell $line={line} />
                        </Row>
                      );
                    })}
                  </Rows>
                  <VTrack>
                    <ChevronUp size={15} />
                    <VThumb />
                    <VEnd><ChevronDown size={15} /></VEnd>
                  </VTrack>
                  <CornerPatch />
                </GridBody>
                <HTrack>
                  <HPatch />
                  <HArrow><ChevronLeft size={14} /></HArrow>
                  <HThumb />
                  <HEnd><ChevronRight size={14} /></HEnd>
                </HTrack>
                <Watermark>
                  <WatermarkTop>Activate Windows</WatermarkTop>
                  <WatermarkSub>ings to activate Windows.</WatermarkSub>
                </Watermark>
              </Sheet>

              <RightPanel>
                <PanelButton><MessageSquare size={46} strokeWidth={1.6} /></PanelButton>
                <PanelButton><Paperclip size={42} strokeWidth={1.8} /></PanelButton>
                <PanelButton><CardsIcon /></PanelButton>
                <PanelButton><BoxBIcon /></PanelButton>
                <PanelButton><SyncIcon /></PanelButton>
                <PanelButton><UploadDocIcon /></PanelButton>
                <PanelButton><PulseIcon /></PanelButton>
                <PanelButton />
                <PanelButton><PeopleIcon /></PanelButton>
              </RightPanel>

              <FormulaBox>
                =IF(<Err>ISDATE</Err>(<Ref $c="#0000ff">[Completion Date]@row</Ref>), "", TODAY<Ref $c="#ff00ff">()</Ref> - <Ref $c="#ff00ff">[Due Date]@row</Ref>)
                <TextCaret />
              </FormulaBox>
            </Workspace>
          </Main>
        </Body>
      </Page>
    </>
  );
}
